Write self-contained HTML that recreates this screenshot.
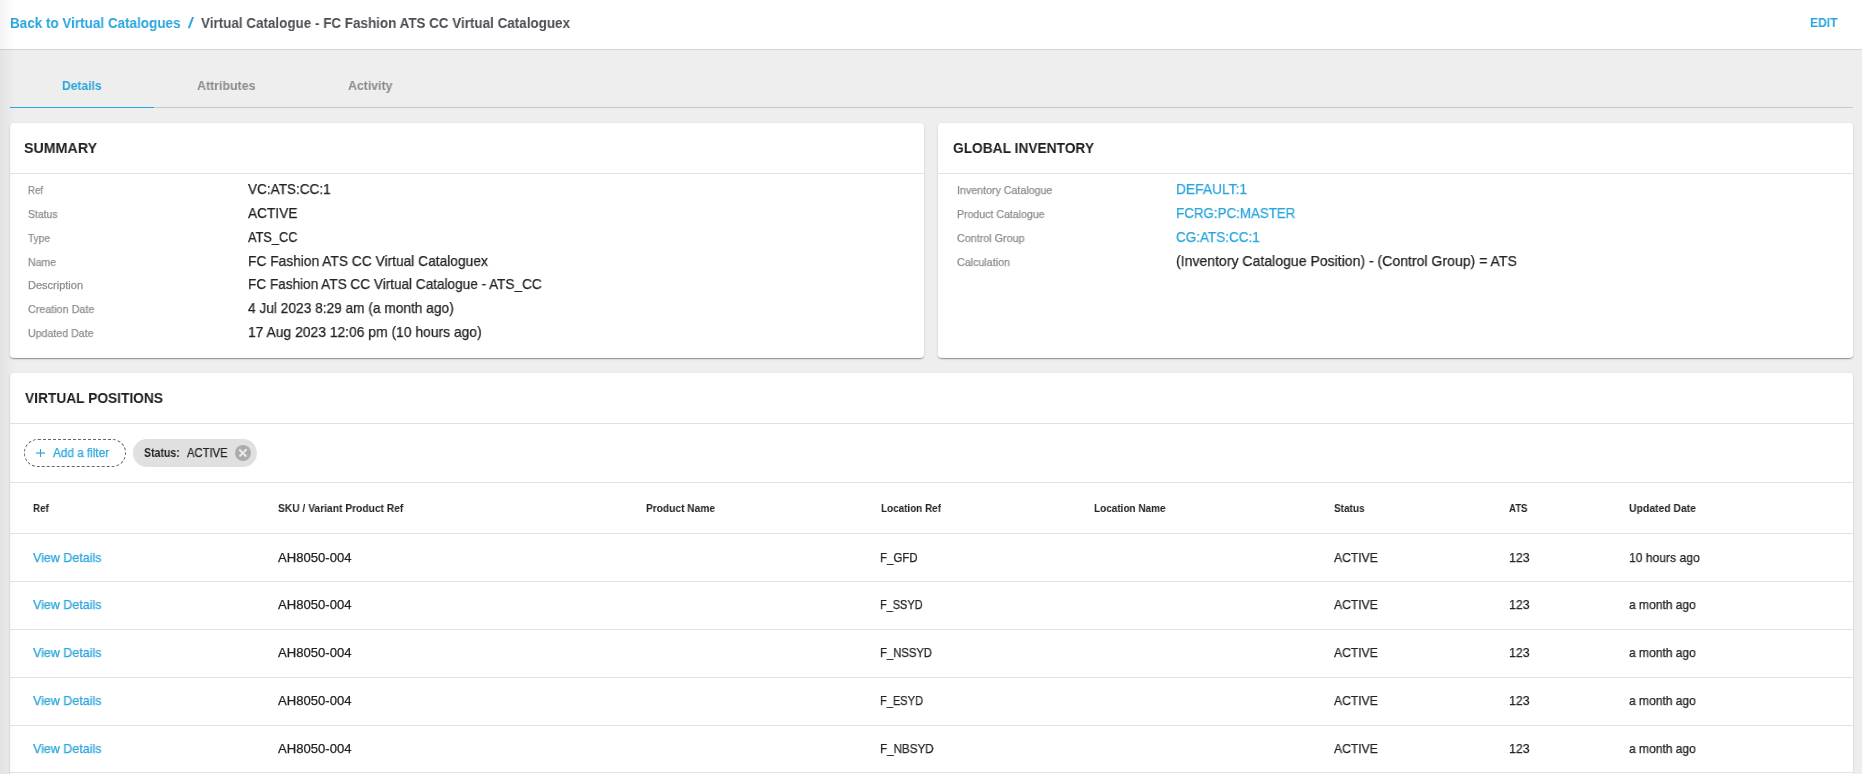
<!DOCTYPE html>
<html lang="en"><head><meta charset="utf-8"><title>Virtual Catalogue - FC Fashion ATS CC Virtual Cataloguex</title><style>
*{margin:0;padding:0;box-sizing:border-box}
html,body{width:1862px;height:774px;overflow:hidden;background:#eeeeee;font-family:"Liberation Sans",sans-serif}
body{position:relative}
.t{position:absolute;white-space:nowrap;transform-origin:0 0;will-change:transform}
.r{-webkit-text-stroke:0.25px currentColor}
.hdr{position:absolute;left:0;top:0;width:1862px;height:50px;background:#fff;border-bottom:1px solid #d3d5d8}
.tabs{position:absolute;left:0;top:50px;width:1862px;height:73px}
.tabline{position:absolute;left:10px;top:57px;width:1843px;height:1px;background:#c8c8c8}
.tabactive{position:absolute;left:10px;top:57px;width:144px;height:1px;background:#29a5de}
.card{position:absolute;background:#fff;border-radius:4px;box-shadow:0 2px 1px -1px rgba(0,0,0,.2),0 1px 1px 0 rgba(0,0,0,.14),0 1px 3px 0 rgba(0,0,0,.12)}
.div{position:absolute;left:0;right:0;height:1px;background:#e2e2e2}
.pill{position:absolute;border:1px dashed #666;border-radius:14px}
.chip{position:absolute;background:#e0e0e0;border-radius:14px}
.plus{position:absolute;width:9px;height:9px}
.plus:before{content:"";position:absolute;left:0;top:3.3px;width:9px;height:1.6px;background:#29a5de;opacity:.6}
.plus:after{content:"";position:absolute;left:4px;top:0;width:1.1px;height:8px;background:#29a5de}
.x{position:absolute;width:16px;height:16px;border-radius:50%;background:#acacac}
.x:before,.x:after{content:"";position:absolute;left:3.2px;top:7.15px;width:9.6px;height:1.7px;background:#ececec;transform:rotate(45deg)}
.x:after{transform:rotate(-45deg)}
.lshadow{position:absolute;left:0;top:0;width:16px;height:774px;background:linear-gradient(to right,rgba(0,0,0,.045),rgba(0,0,0,0))}
</style></head>
<body>
<header class="hdr">
<span class="t" style="left:10.30px;top:15.20px;font-size:15px;line-height:15px;color:#29a5de;font-weight:700;transform:scaleX(0.8984);">Back to Virtual Catalogues</span>
<span class="t r" style="left:188.30px;top:15.20px;font-size:15px;line-height:15px;color:#29a5de;font-weight:400;transform:scaleX(1.3909);">/</span>
<span class="t" style="left:201.40px;top:15.20px;font-size:15px;line-height:15px;color:#4b4e53;font-weight:700;transform:scaleX(0.8956);">Virtual Catalogue - FC Fashion ATS CC Virtual Cataloguex</span>
<span class="t" style="left:1810.20px;top:16.09px;font-size:13px;line-height:13px;color:#29a5de;font-weight:700;transform:scaleX(0.9252);">EDIT</span>
</header>
<nav class="tabs">
<span class="t" style="left:62.30px;top:28.89px;font-size:13px;line-height:13px;color:#29a5de;font-weight:700;transform:scaleX(0.9266);">Details</span>
<span class="t" style="left:196.80px;top:28.89px;font-size:13px;line-height:13px;color:#8a8a8a;font-weight:700;transform:scaleX(0.9514);">Attributes</span>
<span class="t" style="left:347.70px;top:28.89px;font-size:13px;line-height:13px;color:#8a8a8a;font-weight:700;transform:scaleX(0.9456);">Activity</span>
<div class="tabline"></div><div class="tabactive"></div>
</nav>
<section class="card" style="left:10px;top:123px;width:914px;height:235px"><span class="t" style="left:14.30px;top:17.30px;font-size:15px;line-height:15px;color:#1e1e1e;font-weight:700;transform:scaleX(0.9489);">SUMMARY</span><div class="div" style="top:50px"></div><span class="t r" style="left:18.40px;top:61.69px;font-size:11px;line-height:11px;color:#8d8d8d;font-weight:400;transform:scaleX(0.8869);">Ref</span><span class="t r" style="left:238.00px;top:58.30px;font-size:15px;line-height:15px;color:#232323;font-weight:400;transform:scaleX(0.9047);">VC:ATS:CC:1</span><span class="t r" style="left:18.40px;top:85.69px;font-size:11px;line-height:11px;color:#8d8d8d;font-weight:400;transform:scaleX(0.9460);">Status</span><span class="t r" style="left:238.00px;top:82.30px;font-size:15px;line-height:15px;color:#232323;font-weight:400;transform:scaleX(0.9118);">ACTIVE</span><span class="t r" style="left:18.40px;top:109.69px;font-size:11px;line-height:11px;color:#8d8d8d;font-weight:400;transform:scaleX(0.9225);">Type</span><span class="t r" style="left:238.00px;top:106.30px;font-size:15px;line-height:15px;color:#232323;font-weight:400;transform:scaleX(0.8508);">ATS_CC</span><span class="t r" style="left:18.40px;top:133.69px;font-size:11px;line-height:11px;color:#8d8d8d;font-weight:400;transform:scaleX(0.9541);">Name</span><span class="t r" style="left:238.00px;top:130.30px;font-size:15px;line-height:15px;color:#232323;font-weight:400;transform:scaleX(0.9180);">FC Fashion ATS CC Virtual Cataloguex</span><span class="t r" style="left:18.40px;top:156.69px;font-size:11px;line-height:11px;color:#8d8d8d;font-weight:400;">Description</span><span class="t r" style="left:238.00px;top:153.30px;font-size:15px;line-height:15px;color:#232323;font-weight:400;transform:scaleX(0.9056);">FC Fashion ATS CC Virtual Catalogue - ATS_CC</span><span class="t r" style="left:18.40px;top:180.69px;font-size:11px;line-height:11px;color:#8d8d8d;font-weight:400;transform:scaleX(0.9769);">Creation Date</span><span class="t r" style="left:238.00px;top:177.30px;font-size:15px;line-height:15px;color:#232323;font-weight:400;transform:scaleX(0.9137);">4 Jul 2023 8:29 am (a month ago)</span><span class="t r" style="left:18.40px;top:204.69px;font-size:11px;line-height:11px;color:#8d8d8d;font-weight:400;transform:scaleX(0.9649);">Updated Date</span><span class="t r" style="left:238.00px;top:201.30px;font-size:15px;line-height:15px;color:#232323;font-weight:400;transform:scaleX(0.9248);">17 Aug 2023 12:06 pm (10 hours ago)</span></section>
<section class="card" style="left:938px;top:123px;width:915px;height:235px"><span class="t" style="left:14.50px;top:17.30px;font-size:15px;line-height:15px;color:#1e1e1e;font-weight:700;transform:scaleX(0.9162);">GLOBAL INVENTORY</span><div class="div" style="top:50px"></div><span class="t r" style="left:19.10px;top:61.69px;font-size:11px;line-height:11px;color:#8d8d8d;font-weight:400;transform:scaleX(0.9690);">Inventory Catalogue</span><span class="t r" style="left:238.20px;top:58.30px;font-size:15px;line-height:15px;color:#29a5de;font-weight:400;transform:scaleX(0.9191);">DEFAULT:1</span><span class="t r" style="left:19.10px;top:85.69px;font-size:11px;line-height:11px;color:#8d8d8d;font-weight:400;transform:scaleX(0.9603);">Product Catalogue</span><span class="t r" style="left:238.20px;top:82.30px;font-size:15px;line-height:15px;color:#29a5de;font-weight:400;transform:scaleX(0.8899);">FCRG:PC:MASTER</span><span class="t r" style="left:19.10px;top:109.69px;font-size:11px;line-height:11px;color:#8d8d8d;font-weight:400;transform:scaleX(0.9770);">Control Group</span><span class="t r" style="left:238.20px;top:106.30px;font-size:15px;line-height:15px;color:#29a5de;font-weight:400;transform:scaleX(0.8993);">CG:ATS:CC:1</span><span class="t r" style="left:19.10px;top:133.69px;font-size:11px;line-height:11px;color:#8d8d8d;font-weight:400;transform:scaleX(0.9740);">Calculation</span><span class="t r" style="left:238.20px;top:130.30px;font-size:15px;line-height:15px;color:#232323;font-weight:400;transform:scaleX(0.9372);">(Inventory Catalogue Position) - (Control Group) = ATS</span></section>
<section class="card" style="left:10px;top:373px;width:1843px;height:520px"><span class="t" style="left:14.90px;top:17.30px;font-size:15px;line-height:15px;color:#1e1e1e;font-weight:700;transform:scaleX(0.9165);">VIRTUAL POSITIONS</span><div class="div" style="top:50px"></div><div class="pill" style="left:14px;top:66px;width:102px;height:28px"></div><div class="plus" style="left:26px;top:76px"></div><span class="t r" style="left:43.30px;top:73.54px;font-size:12px;line-height:12px;color:#29a5de;font-weight:400;transform:scaleX(0.9780);">Add a filter</span><div class="chip" style="left:123px;top:66px;width:124px;height:28px"></div><span class="t" style="left:134.20px;top:73.54px;font-size:12px;line-height:12px;color:#232323;font-weight:700;transform:scaleX(0.8778);">Status:</span><span class="t r" style="left:176.70px;top:73.54px;font-size:12px;line-height:12px;color:#232323;font-weight:400;transform:scaleX(0.9367);">ACTIVE</span><div class="x" style="left:225px;top:72px"></div><div class="div" style="top:109px"></div><span class="t" style="left:22.90px;top:129.69px;font-size:11px;line-height:11px;color:#232323;font-weight:700;transform:scaleX(0.8961);">Ref</span><span class="t" style="left:268.40px;top:129.69px;font-size:11px;line-height:11px;color:#232323;font-weight:700;transform:scaleX(0.9316);">SKU / Variant Product Ref</span><span class="t" style="left:636.00px;top:129.69px;font-size:11px;line-height:11px;color:#232323;font-weight:700;transform:scaleX(0.9253);">Product Name</span><span class="t" style="left:870.75px;top:129.69px;font-size:11px;line-height:11px;color:#232323;font-weight:700;transform:scaleX(0.9004);">Location Ref</span><span class="t" style="left:1083.50px;top:129.69px;font-size:11px;line-height:11px;color:#232323;font-weight:700;transform:scaleX(0.9068);">Location Name</span><span class="t" style="left:1324.30px;top:129.69px;font-size:11px;line-height:11px;color:#232323;font-weight:700;transform:scaleX(0.9133);">Status</span><span class="t" style="left:1498.70px;top:129.69px;font-size:11px;line-height:11px;color:#232323;font-weight:700;transform:scaleX(0.8732);">ATS</span><span class="t" style="left:1619.30px;top:129.69px;font-size:11px;line-height:11px;color:#232323;font-weight:700;transform:scaleX(0.9451);">Updated Date</span><div class="div" style="top:160.3px"></div><span class="t r" style="left:23.00px;top:177.59px;font-size:13px;line-height:13px;color:#29a5de;font-weight:400;transform:scaleX(0.9608);">View Details</span><span class="t r" style="left:268.30px;top:177.59px;font-size:13px;line-height:13px;color:#232323;font-weight:400;transform:scaleX(1.0069);">AH8050-004</span><span class="t r" style="left:870.40px;top:177.59px;font-size:13px;line-height:13px;color:#232323;font-weight:400;transform:scaleX(0.8823);">F_GFD</span><span class="t r" style="left:1324.00px;top:177.59px;font-size:13px;line-height:13px;color:#232323;font-weight:400;transform:scaleX(0.9328);">ACTIVE</span><span class="t r" style="left:1499.00px;top:177.59px;font-size:13px;line-height:13px;color:#232323;font-weight:400;transform:scaleX(0.9500);">123</span><span class="t r" style="left:1619.20px;top:177.59px;font-size:13px;line-height:13px;color:#232323;font-weight:400;transform:scaleX(0.9316);">10 hours ago</span><div class="div" style="top:208.1px"></div><span class="t r" style="left:23.00px;top:225.39px;font-size:13px;line-height:13px;color:#29a5de;font-weight:400;transform:scaleX(0.9608);">View Details</span><span class="t r" style="left:268.30px;top:225.39px;font-size:13px;line-height:13px;color:#232323;font-weight:400;transform:scaleX(1.0069);">AH8050-004</span><span class="t r" style="left:870.40px;top:225.39px;font-size:13px;line-height:13px;color:#232323;font-weight:400;transform:scaleX(0.8424);">F_SSYD</span><span class="t r" style="left:1324.00px;top:225.39px;font-size:13px;line-height:13px;color:#232323;font-weight:400;transform:scaleX(0.9328);">ACTIVE</span><span class="t r" style="left:1499.00px;top:225.39px;font-size:13px;line-height:13px;color:#232323;font-weight:400;transform:scaleX(0.9500);">123</span><span class="t r" style="left:1619.20px;top:225.39px;font-size:13px;line-height:13px;color:#232323;font-weight:400;transform:scaleX(0.9242);">a month ago</span><div class="div" style="top:255.9px"></div><span class="t r" style="left:23.00px;top:273.19px;font-size:13px;line-height:13px;color:#29a5de;font-weight:400;transform:scaleX(0.9608);">View Details</span><span class="t r" style="left:268.30px;top:273.19px;font-size:13px;line-height:13px;color:#232323;font-weight:400;transform:scaleX(1.0069);">AH8050-004</span><span class="t r" style="left:870.40px;top:273.19px;font-size:13px;line-height:13px;color:#232323;font-weight:400;transform:scaleX(0.8673);">F_NSSYD</span><span class="t r" style="left:1324.00px;top:273.19px;font-size:13px;line-height:13px;color:#232323;font-weight:400;transform:scaleX(0.9328);">ACTIVE</span><span class="t r" style="left:1499.00px;top:273.19px;font-size:13px;line-height:13px;color:#232323;font-weight:400;transform:scaleX(0.9500);">123</span><span class="t r" style="left:1619.20px;top:273.19px;font-size:13px;line-height:13px;color:#232323;font-weight:400;transform:scaleX(0.9242);">a month ago</span><div class="div" style="top:303.7px"></div><span class="t r" style="left:23.00px;top:320.99px;font-size:13px;line-height:13px;color:#29a5de;font-weight:400;transform:scaleX(0.9608);">View Details</span><span class="t r" style="left:268.30px;top:320.99px;font-size:13px;line-height:13px;color:#232323;font-weight:400;transform:scaleX(1.0069);">AH8050-004</span><span class="t r" style="left:870.40px;top:320.99px;font-size:13px;line-height:13px;color:#232323;font-weight:400;transform:scaleX(0.8503);">F_ESYD</span><span class="t r" style="left:1324.00px;top:320.99px;font-size:13px;line-height:13px;color:#232323;font-weight:400;transform:scaleX(0.9328);">ACTIVE</span><span class="t r" style="left:1499.00px;top:320.99px;font-size:13px;line-height:13px;color:#232323;font-weight:400;transform:scaleX(0.9500);">123</span><span class="t r" style="left:1619.20px;top:320.99px;font-size:13px;line-height:13px;color:#232323;font-weight:400;transform:scaleX(0.9242);">a month ago</span><div class="div" style="top:351.5px"></div><span class="t r" style="left:23.00px;top:368.79px;font-size:13px;line-height:13px;color:#29a5de;font-weight:400;transform:scaleX(0.9608);">View Details</span><span class="t r" style="left:268.30px;top:368.79px;font-size:13px;line-height:13px;color:#232323;font-weight:400;transform:scaleX(1.0069);">AH8050-004</span><span class="t r" style="left:870.40px;top:368.79px;font-size:13px;line-height:13px;color:#232323;font-weight:400;transform:scaleX(0.8940);">F_NBSYD</span><span class="t r" style="left:1324.00px;top:368.79px;font-size:13px;line-height:13px;color:#232323;font-weight:400;transform:scaleX(0.9328);">ACTIVE</span><span class="t r" style="left:1499.00px;top:368.79px;font-size:13px;line-height:13px;color:#232323;font-weight:400;transform:scaleX(0.9500);">123</span><span class="t r" style="left:1619.20px;top:368.79px;font-size:13px;line-height:13px;color:#232323;font-weight:400;transform:scaleX(0.9242);">a month ago</span><div class="div" style="top:399.3px"></div></section>
<div class="lshadow"></div>
</body></html>
